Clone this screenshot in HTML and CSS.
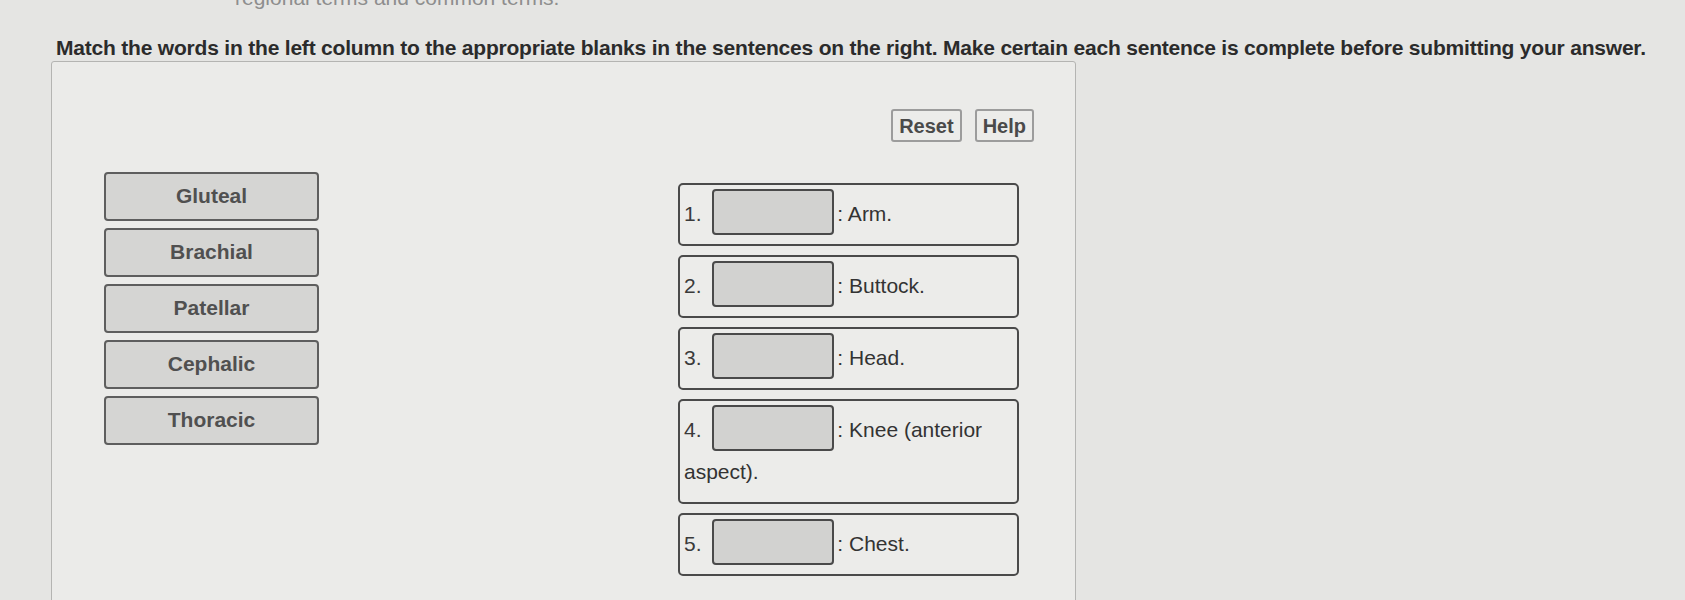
FILE: index.html
```html
<!DOCTYPE html>
<html lang="en">
<head>
<meta charset="utf-8">
<title>Matching</title>
<link rel="stylesheet" href="styles.css">
</head>
<body>
<div class="page">
  <p class="prev-line">regional terms and common terms.</p>
  <h1 class="instructions">Match the words in the left column to the appropriate blanks in the sentences on the right. Make certain each sentence is complete before submitting your answer.</h1>
  <div class="panel">
    <div class="toolbar">
      <button class="tool-btn">Reset</button>
      <button class="tool-btn">Help</button>
    </div>
    <div class="match-area">
      <div class="word-bank">
        <div class="word">Gluteal</div>
        <div class="word">Brachial</div>
        <div class="word">Patellar</div>
        <div class="word">Cephalic</div>
        <div class="word">Thoracic</div>
      </div>
      <div class="sentences">
        <div class="sentence"><span class="num">1.</span> <span class="blank"></span><span class="term">: Arm.</span></div>
        <div class="sentence"><span class="num">2.</span> <span class="blank"></span><span class="term">: Buttock.</span></div>
        <div class="sentence"><span class="num">3.</span> <span class="blank"></span><span class="term">: Head.</span></div>
        <div class="sentence"><span class="num">4.</span> <span class="blank"></span><span class="term">: Knee (anterior</span> <span class="term">aspect).</span></div>
        <div class="sentence"><span class="num">5.</span> <span class="blank"></span><span class="term">: Chest.</span></div>
      </div>
    </div>
  </div>
</div>
</body>
</html>
```
FILE: styles.css
```css
html, body {
  margin: 0;
  padding: 0;
  background: #e5e5e3;
  height: 100%;
  overflow: hidden;
}

.page {
  font-family: "Liberation Sans", Arial, sans-serif;
  color: #2e2e2e;
}

.prev-line {
  margin: -14px 0 0 0;
  padding-left: 235px;
  font-size: 21px;
  line-height: 24px;
  color: #8e8e8e;
  white-space: nowrap;
}

.instructions {
  margin: 26px 0 0 0;
  padding-left: 56px;
  font-size: 21px;
  line-height: 24px;
  font-weight: bold;
  letter-spacing: -0.2px;
  color: #2b2b2b;
  white-space: nowrap;
}

.panel {
  margin: 1px 0 0 51px;
  width: 1025px;
  min-height: 560px;
  border: 1px solid #b4b4b2;
  border-radius: 3px;
  background: #ebebe9;
  box-sizing: border-box;
}

.toolbar {
  display: flex;
  justify-content: flex-end;
  gap: 13px;
  padding: 47px 41px 0 0;
}

.tool-btn {
  font-family: "Liberation Sans", Arial, sans-serif;
  font-size: 20px;
  font-weight: bold;
  color: #4a4a4a;
  background: #ececea;
  border: 2px solid #9c9c9c;
  border-radius: 3px;
  height: 33px;
  padding: 0 6px;
  line-height: 28px;
}

.match-area {
  display: flex;
  justify-content: space-between;
  padding: 30px 56px 0 52px;
}

.word-bank {
  display: flex;
  flex-direction: column;
  gap: 7px;
  width: 215px;
}

.word {
  height: 49px;
  box-sizing: border-box;
  border: 2px solid #5e5e5e;
  border-radius: 4px;
  background: #d5d5d3;
  display: flex;
  align-items: center;
  justify-content: center;
  padding-bottom: 2px;
  font-size: 21px;
  font-weight: bold;
  color: #505050;
}

.sentences {
  display: flex;
  flex-direction: column;
  gap: 9px;
  width: 341px;
  margin-top: 11px;
}

.sentence {
  border: 2px solid #4a4a4a;
  border-radius: 5px;
  padding: 4px 6px 9px 4px;
  font-size: 21px;
  line-height: 42px;
  color: #333;
  background: #ececea;
}

.num {
  color: #3a3a3a;
}

.term {
  color: #333;
}

.blank {
  display: inline-block;
  width: 122px;
  height: 46px;
  box-sizing: border-box;
  border: 2px solid #4a4a4a;
  border-radius: 4px;
  background: #d2d2d0;
  vertical-align: -14px;
  margin: 0 3px 0 5px;
}
```
